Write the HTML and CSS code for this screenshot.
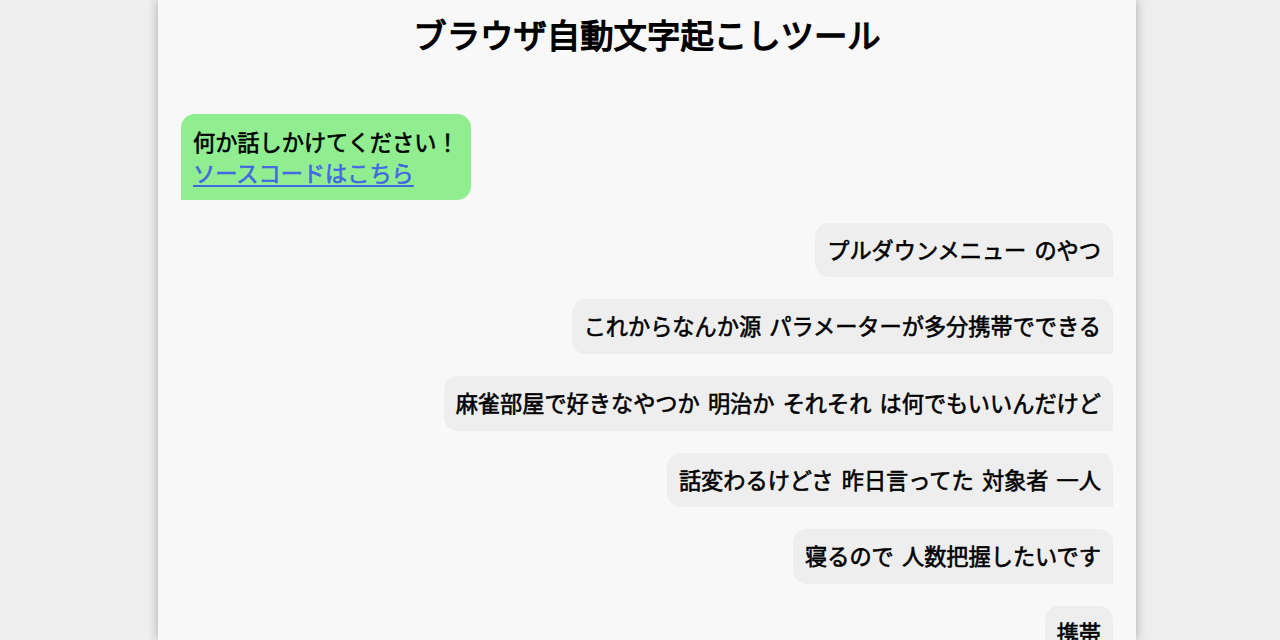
FILE: index.html
```html
<!DOCTYPE html>
<html lang="ja">
<head>
  <meta charset="UTF-8" />
  <meta name="viewport" content="width=device-width, initial-scale=1" />
  <title>ブラウザ自動文字起こしツール</title>
  <link rel="stylesheet" href="styles.css">
</head>
<body>
  <div class="container">
    <h1>ブラウザ自動文字起こしツール</h1>
    <div class="chat">
      <div class="bubble bot">何か話しかけてください！<br><a href="#">ソースコードはこちら</a></div>
      <div class="bubble user">プルダウンメニュー のやつ</div>
      <div class="bubble user">これからなんか源 パラメーターが多分携帯でできる</div>
      <div class="bubble user">麻雀部屋で好きなやつか 明治か それそれ は何でもいいんだけど</div>
      <div class="bubble user">話変わるけどさ 昨日言ってた 対象者 一人</div>
      <div class="bubble user">寝るので 人数把握したいです</div>
      <div class="bubble user">携帯</div>
    </div>
  </div>
</body>
</html>
```

FILE: styles.css
```css
* {
  box-sizing: border-box;
}
html, body {
  height: 100%;
}
body {
  margin: 0;
  background: #eeeeee;
  font-family: "Liberation Sans", "Noto Sans CJK JP", sans-serif;
  overflow: hidden;
}
.container {
  width: 978px;
  margin-left: 158px;
  height: 100%;
  background: #f8f8f8;
  box-shadow: 0 0 10px rgba(0,0,0,0.3);
  padding: 0 23px;
}
h1 {
  margin: 0;
  padding-top: 16px;
  text-align: center;
  font-size: 33.4px;
  line-height: 42px;
  font-weight: 400;
  -webkit-text-stroke: 1.4px #000;
  color: #000;
}
.chat {
  display: flex;
  flex-direction: column;
  margin-top: 56px;
}
.bubble {
  font-size: 22.2px;
  line-height: 30.6px;
  font-weight: 400;
  word-spacing: 2px;
  -webkit-text-stroke: 0.6px currentColor;
  padding: 14px 12px 10px;
  border-radius: 14px;
  margin-bottom: 22px;
  max-width: 100%;
}
.bot {
  align-self: flex-start;
  background: #90ee90;
  line-height: 31px;
  border-bottom-left-radius: 0;
  margin-bottom: 22.8px;
}
.bot a {
  color: #4169e1;
  text-underline-offset: 3px;
}
.user {
  align-self: flex-end;
  background: #eeeeee;
  border-bottom-right-radius: 0;
}
```
